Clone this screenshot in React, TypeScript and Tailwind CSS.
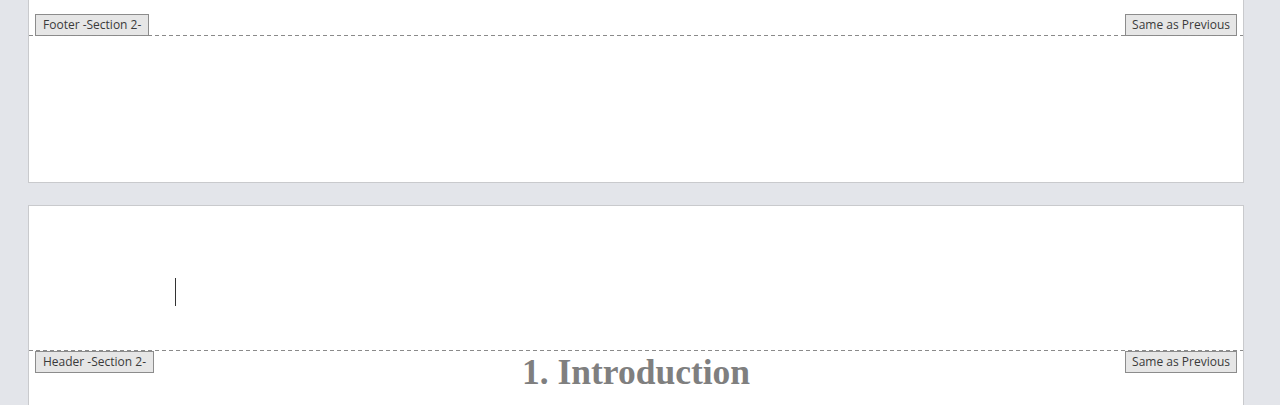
import React from 'react'

const uiFont = { fontFamily: '"Open Sans", "Noto Sans", sans-serif' }

function Tab({ label, tight }: { label: string; tight?: boolean }) {
  return (
    <div
      className={`h-[22px] ${tight ? 'px-[6px]' : 'px-[7px]'} flex items-center bg-[#e6e6e6] border border-[#8c8c8c] text-[12px] leading-none text-[#3a3a3a] whitespace-nowrap`}
      style={uiFont}
    >
      {label}
    </div>
  )
}

function DashedRule({ left, right, hang }: { left: string; right: string; hang?: boolean }) {
  const tabs = (
    <div className="flex justify-between px-[6px]">
      <Tab label={left} />
      <Tab label={right} tight />
    </div>
  )
  return (
    <div className="flex flex-col">
      {!hang && tabs}
      <div className="h-px w-full bg-[repeating-linear-gradient(90deg,#8a8a8a_0px,#8a8a8a_4px,transparent_4px,transparent_7px)] -mt-px" />
      {hang && tabs}
    </div>
  )
}

export default function App() {
  return (
    <div className="w-[1280px] h-[405px] overflow-hidden bg-[#e3e5ea] pl-[28px] pr-[36px]">
      {/* bottom of page 1 */}
      <div className="h-[183px] bg-white border-x border-b border-[#c9cacd] pt-[14px]">
        <DashedRule left="Footer -Section 2-" right="Same as Previous" />
      </div>

      {/* top of page 2 */}
      <div className="mt-[22px] h-[220px] bg-white border-x border-t border-[#c9cacd] flex flex-col">
        <div className="h-[145px] pl-[146px] pt-[72px]">
          <div className="w-px h-[28px] bg-[#333]" />
        </div>
        <div className="relative">
          <DashedRule left="Header -Section 2-" right="Same as Previous" hang />
          <div
            className="absolute left-0 right-0 top-[1px] text-center text-[35.5px] font-bold text-[#7f7f7f] leading-[40px]"
            style={{ fontFamily: '"Liberation Serif", "Times New Roman", serif' }}
          >
            1. Introduction
          </div>
        </div>
      </div>
    </div>
  )
}
